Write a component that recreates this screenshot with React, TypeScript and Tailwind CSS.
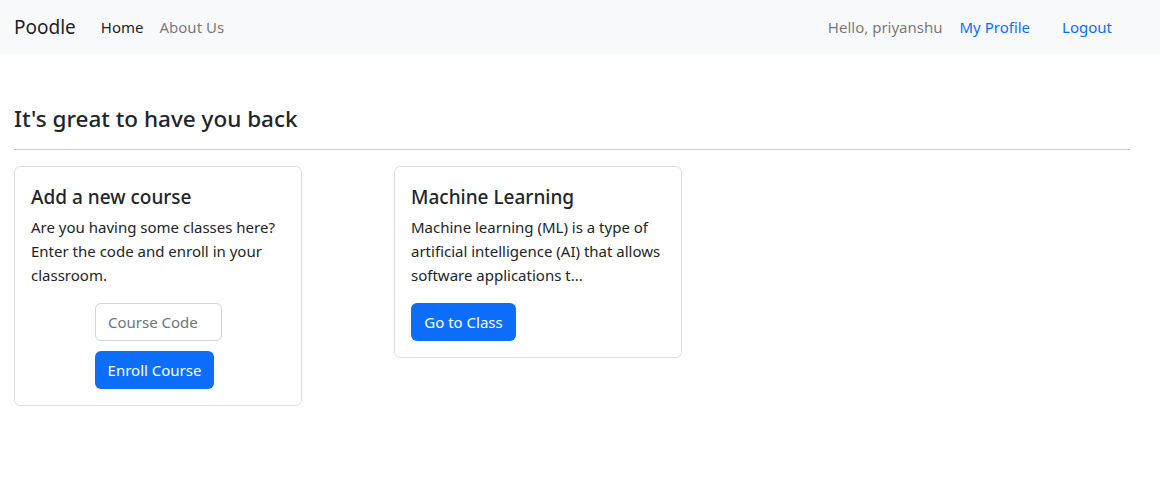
export default function App() {
  const font = { fontFamily: '"Noto Sans", "Open Sans", sans-serif' };
  return (
    <div className="min-h-[482px] bg-white text-[#212529] text-[15px] leading-[24px]" style={font}>
      <nav className="h-[54px] bg-[#f8f9fa] flex items-center px-[14px] pb-[1px]">
        <span className="text-[19px] leading-[30px] mr-[25px] text-[#000000e6]">Poodle</span>
        <span className="text-[#000000e6] mr-[16px]">Home</span>
        <span className="text-[#0000008c]">About Us</span>
        <div className="ml-auto flex items-center">
          <span className="text-[#0000008c] mr-[17px]">Hello, priyanshu</span>
          <span className="text-[#0d6efd] mr-[32px]">My Profile</span>
          <span className="text-[#0d6efd] mr-[34px]">Logout</span>
        </div>
      </nav>
      <main className="px-[14px] pt-[50px]">
        <h4 className="text-[22.5px] leading-[29px] font-medium">It's great to have you back</h4>
        <hr className="mt-[16px] mb-[16px] border-t border-[#cacbcc] mr-[16px]" />
        <div className="flex items-start gap-[92px]">
          <div className="w-[288px] border border-[#00000020] rounded-[6px] p-[16px]">
            <h5 className="text-[19px] leading-[24px] font-medium mb-[6px] mt-[2px]">Add a new course</h5>
            <p>Are you having some classes here? Enter the code and enroll in your classroom.</p>
            <div className="flex flex-col items-start mt-[16px] ml-[64px]">
              <input
                className="w-[127px] h-[38px] border border-[#ced4da] rounded-[6px] px-[12px] text-[15px] placeholder:text-[#6c757d] outline-none"
                placeholder="Course Code"
                style={font}
              />
              <button className="mt-[10px] h-[38px] w-[119px] rounded-[6px] bg-[#0d6efd] text-white">Enroll Course</button>
            </div>
          </div>
          <div className="w-[288px] border border-[#00000020] rounded-[6px] p-[16px]">
            <h5 className="text-[19px] leading-[24px] font-medium mb-[6px] mt-[2px]">Machine Learning</h5>
            <p>Machine learning (ML) is a type of artificial intelligence (AI) that allows software applications t...</p>
            <button className="mt-[16px] h-[38px] w-[105px] rounded-[6px] bg-[#0d6efd] text-white">Go to Class</button>
          </div>
        </div>
      </main>
    </div>
  );
}
